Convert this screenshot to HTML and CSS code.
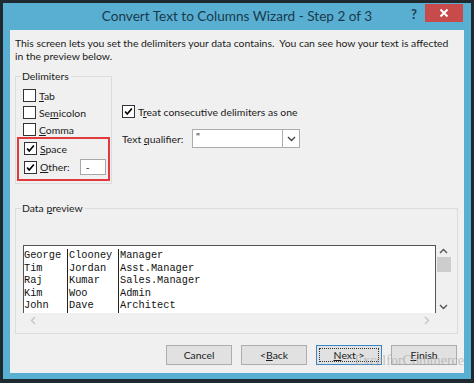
FILE: index.html
```html
<!DOCTYPE html>
<html>
<head>
<meta charset="utf-8">
<link rel="stylesheet" href="styles.css">
</head>
<body>
<div class="window">
  <div class="frame">
    <div class="titlebar">
      <div class="title">Convert Text to Columns Wizard - Step 2 of 3</div>
      <div class="help">?</div>
      <div class="close">
        <svg width="10" height="10" viewBox="0 0 10 10"><path d="M1.5 1.5 L8.5 8.5 M8.5 1.5 L1.5 8.5" stroke="#fff" stroke-width="2"/></svg>
      </div>
    </div>
    <div class="content">
      <p class="intro">This screen lets you set the delimiters your data contains.&nbsp; You can see how your text is affected in the preview below.</p>
      <div class="top">
        <div class="group delims">
          <div class="legend">Delimiters</div>
          <div class="row"><span class="cb"></span><span><u>T</u>ab</span></div>
          <div class="row"><span class="cb"></span><span>Se<u>m</u>icolon</span></div>
          <div class="row"><span class="cb"></span><span><u>C</u>omma</span></div>
          <div class="mark">
            <div class="row"><span class="cb on"><svg viewBox="0 0 13 13"><path d="M2.5 6.5 L5 9.5 L10.5 3" fill="none" stroke="#000" stroke-width="2"/></svg></span><span><u>S</u>pace</span></div>
            <div class="row other"><span class="cb on"><svg viewBox="0 0 13 13"><path d="M2.5 6.5 L5 9.5 L10.5 3" fill="none" stroke="#000" stroke-width="2"/></svg></span><span><u>O</u>ther:</span><span class="otherbox">-</span></div>
          </div>
        </div>
        <div class="opts">
          <div class="row"><span class="cb on"><svg viewBox="0 0 13 13"><path d="M2.5 6.5 L5 9.5 L10.5 3" fill="none" stroke="#000" stroke-width="2"/></svg></span><span>T<u>r</u>eat consecutive delimiters as one</span></div>
          <div class="qual">
            <span>Text <u>q</u>ualifier:</span>
            <div class="combo"><span class="val">"</span><span class="drop"><svg width="9" height="6" viewBox="0 0 9 6"><path d="M1 1 L4.5 4.5 L8 1" fill="none" stroke="#444" stroke-width="1.4"/></svg></span></div>
          </div>
        </div>
      </div>
      <div class="group preview">
        <div class="legend">Data <u>p</u>review</div>
        <div class="pv">
          <div class="pvmain">
            <div class="grid">
              <div class="col c1">George<br>Tim<br>Raj<br>Kim<br>John</div>
              <div class="col c2">Clooney<br>Jordan<br>Kumar<br>Woo<br>Dave</div>
              <div class="col c3">Manager<br>Asst.Manager<br>Sales.Manager<br>Admin<br>Architect</div>
            </div>
            <div class="vscroll">
              <svg width="9" height="6" viewBox="0 0 9 6"><path d="M1 5 L4.5 1.5 L8 5" fill="none" stroke="#555" stroke-width="1.4"/></svg>
              <div class="thumb"></div>
              <div class="spacer"></div>
              <svg width="9" height="6" viewBox="0 0 9 6"><path d="M1 1 L4.5 4.5 L8 1" fill="none" stroke="#555" stroke-width="1.4"/></svg>
            </div>
          </div>
          <div class="hscroll">
            <svg width="6" height="9" viewBox="0 0 6 9"><path d="M5 1 L1.5 4.5 L5 8" fill="none" stroke="#c4c4c4" stroke-width="1.3"/></svg>
            <svg width="6" height="9" viewBox="0 0 6 9"><path d="M1 1 L4.5 4.5 L1 8" fill="none" stroke="#c4c4c4" stroke-width="1.3"/></svg>
          </div>
        </div>
      </div>
      <div class="buttons">
        <div class="btn">Cancel</div>
        <div class="btn">&lt; <u>B</u>ack</div>
        <div class="btn default"><span class="focus"><u>N</u>ext &gt;</span></div>
        <div class="btn"><u>F</u>inish</div>
      </div>
      <div class="watermark">ExcelforCommerce</div>
    </div>
  </div>
</div>
</body>
</html>
```

FILE: styles.css
```css
* { box-sizing: border-box; }
html, body { margin: 0; padding: 0; }
body {
  width: 474px;
  height: 383px;
  overflow: hidden;
  font-family: Lato, "Noto Sans", sans-serif;
  font-size: 10.4px;
  color: #1a1a1a;
}
u { text-decoration: underline; text-underline-offset: 1px; }
.window {
  width: 474px;
  height: 383px;
  background: #1e2a30;
  padding: 3px 3px 4px 3px;
}
.frame {
  height: 100%;
  background: #58afd2;
  padding: 0 7px 6px 7px;
  display: flex;
  flex-direction: column;
}
.titlebar {
  height: 27px;
  position: relative;
  display: flex;
  align-items: flex-start;
  justify-content: center;
}
.title {
  font-size: 13.6px;
  color: #1b3a4c;
  line-height: 27px;
}
.help {
  position: absolute;
  right: 47px;
  top: 3px;
  font-size: 13px;
  font-weight: bold;
  color: #1b3a4c;
}
.close {
  position: absolute;
  right: 1px;
  top: 1px;
  width: 38px;
  height: 18px;
  background: #c84a4a;
  display: flex;
  align-items: center;
  justify-content: center;
}
.content {
  flex: 1;
  background: #f0f0f0;
  padding: 7px 6px 0 5px;
  position: relative;
  display: flex;
  flex-direction: column;
}
.intro {
  margin: 0;
  line-height: 13px;
  padding-right: 2px;
}
.top {
  display: flex;
  gap: 10px;
  margin-top: 13px;
}
.group {
  border: 1px solid #dcdcdc;
  position: relative;
}
.legend {
  position: absolute;
  top: -8px;
  left: 5px;
  background: #f0f0f0;
  padding: 0 2px 0 1px;
  line-height: 14px;
}
.delims {
  width: 97px;
  height: 108px;
  padding: 10px 0 0 0;
}
.row {
  display: flex;
  align-items: center;
  gap: 3px;
  height: 17px;
}
.delims > .row { padding-left: 7px; }
.cb {
  width: 13px;
  height: 13px;
  border: 1px solid #333;
  background: #fff;
  display: inline-flex;
  flex: none;
}
.cb svg { width: 11px; height: 11px; }
.mark {
  border: 2px solid #e0393e;
  margin: -1px 1px 0 1px;
  padding: 1px 0 2px 5px;
}
.other { height: 20px; }
.otherbox {
  margin-left: 7px;
  width: 26px;
  height: 16px;
  background: #fff;
  border: 1px solid #a8a8a8;
  padding-left: 5px;
  line-height: 14px;
}
.opts {
  padding-top: 27px;
  display: flex;
  flex-direction: column;
}
.qual {
  display: flex;
  align-items: center;
  margin-top: 9px;
}
.qual > span { width: 70px; }
.combo {
  width: 108px;
  height: 19px;
  background: #fff;
  border: 1px solid #acacac;
  display: flex;
}
.combo .val { flex: 1; padding-left: 3px; line-height: 13px; }
.combo .drop {
  width: 17px;
  border-left: 1px solid #acacac;
  display: flex;
  align-items: center;
  justify-content: center;
}
.preview {
  margin-top: 24px;
  width: 443px;
  height: 126px;
  padding: 36px 0 0 7px;
}
.pv { width: 428px; }
.pvmain { display: flex; height: 68px; }
.grid {
  width: 413px;
  background: #fff;
  border: 1px solid #555;
  border-bottom: none;
  display: flex;
  font-family: "Liberation Mono", "Courier New", monospace;
  font-size: 10.3px;
  line-height: 12.6px;
  padding-top: 3px;
  color: #111;
}
.c1 { width: 44px; border-right: 1px solid #222; }
.c2 { width: 51px; border-right: 1px solid #222; padding-left: 1px; }
.c3 { padding-left: 1px; }
.vscroll {
  width: 15px;
  display: flex;
  flex-direction: column;
  align-items: center;
  padding-top: 3px;
}
.thumb {
  width: 14px;
  height: 15px;
  background: #cdcdcd;
  margin-top: 3px;
}
.spacer { flex: 1; }
.vscroll svg:last-child { margin-bottom: 3px; }
.hscroll {
  height: 15px;
  display: flex;
  justify-content: space-between;
  align-items: center;
  padding: 0 6px 0 7px;
  width: 413px;
}
.buttons {
  display: flex;
  justify-content: flex-end;
  gap: 9px;
  margin-top: 11px;
  padding-right: 1px;
}
.btn {
  width: 66px;
  height: 20px;
  background: #e1e1e1;
  border: 1px solid #adadad;
  display: flex;
  align-items: center;
  justify-content: center;
}
.btn.default { border-color: #3b86c8; padding: 2px; }
.focus {
  flex: 1;
  height: 100%;
  border: 1px dotted #333;
  display: flex;
  align-items: center;
  justify-content: center;
}
.watermark {
  position: absolute;
  right: 0;
  bottom: 4px;
  font-family: "Liberation Serif", serif;
  font-size: 14px;
  color: rgba(150, 150, 150, 0.55);
  pointer-events: none;
}
```
